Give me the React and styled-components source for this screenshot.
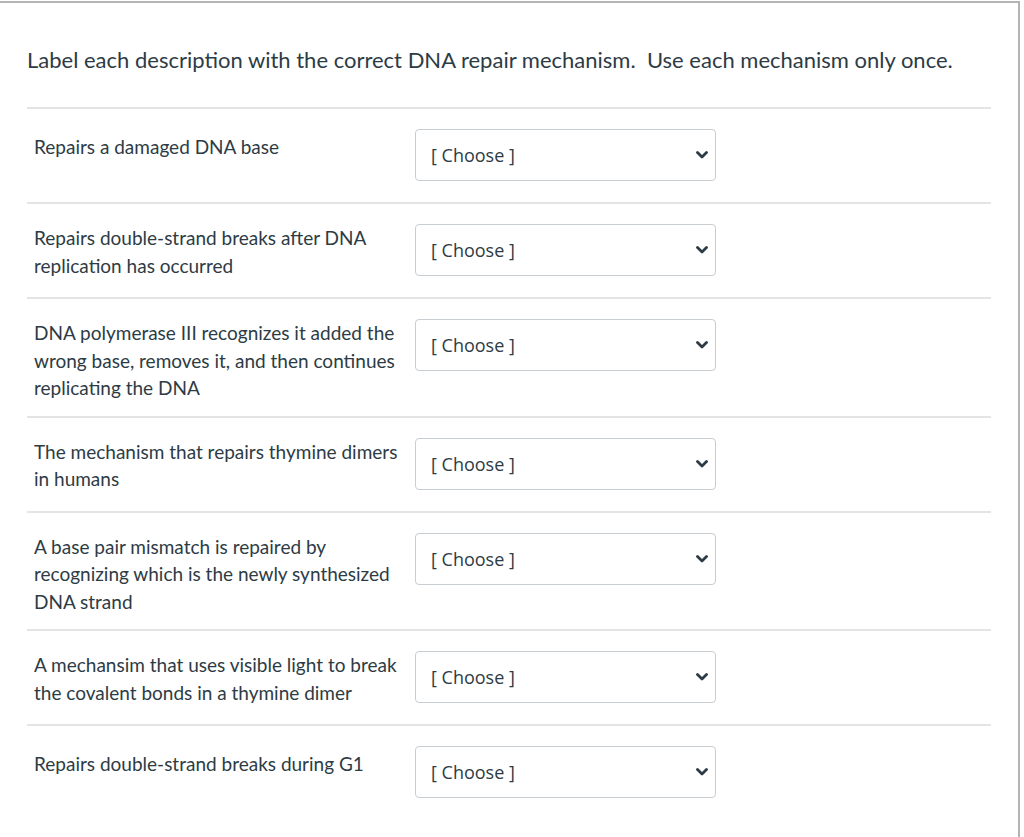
import React from "react";
import styled, { createGlobalStyle } from "styled-components";

const Global = createGlobalStyle`
  html, body { margin: 0; padding: 0; background: #fff; }
  body { font-family: Lato, "Noto Sans", sans-serif; color: #2d3b45; }
`;

const Frame = styled.div`
  width: 1020px;
  box-sizing: border-box;
  margin-top: 1px;
  border-top: 2px solid #b4b4b4;
  border-right: 2px solid #b4b4b4;
  min-height: 836px;
  padding: 0 27px 0 27px;
`;

const Heading = styled.p`
  margin: 42px 0 32px;
  font-size: 22px;
  line-height: 30px;
  color: #2d3b45;
  white-space: pre;
`;

const List = styled.div`
  display: flex;
  flex-direction: column;
`;

const Row = styled.div`
  display: flex;
  align-items: flex-start;
  border-top: 2px solid #e4e4e4;
  padding: 20px 0 14px 7px;
`;

const Label = styled.div`
  width: 372px;
  margin-right: 9px;
  padding-top: ${(p) => (p.$single ? "4px" : "0")};
  font-size: 19px;
  line-height: 27.5px;
  color: #2d3b45;
`;

const SelectWrap = styled.div`
  position: relative;
  width: 301px;
  height: 52px;
  margin-bottom: 7px;
  flex: none;
`;

const Select = styled.select`
  appearance: none;
  -webkit-appearance: none;
  width: 100%;
  height: 100%;
  box-sizing: border-box;
  border: 1px solid #c8cdd1;
  border-radius: 4px;
  background: #fff;
  padding: 0 36px 0 15px;
  font-family: "Open Sans", "Noto Sans", sans-serif;
  font-size: 18px;
  color: #2d3b45;
  outline: none;
`;

const Chevron = styled.svg`
  position: absolute;
  right: 8px;
  top: 50%;
  transform: translateY(-50%);
  pointer-events: none;
`;

const items = [
  { t: "Repairs a damaged DNA base", single: true },
  { t: "Repairs double-strand breaks after DNA replication has occurred" },
  { t: "DNA polymerase III recognizes it added the wrong base, removes it, and then continues replicating the DNA" },
  { t: "The mechanism that repairs thymine dimers in humans" },
  { t: "A base pair mismatch is repaired by recognizing which is the newly synthesized DNA strand" },
  { t: "A mechansim that uses visible light to break the covalent bonds in a thymine dimer" },
  { t: "Repairs double-strand breaks during G1", single: true },
];

function Dropdown() {
  return (
    <SelectWrap>
      <Select defaultValue="">
        <option value="">[ Choose ]</option>
      </Select>
      <Chevron width="12" height="8" viewBox="0 0 12 8">
        <path d="M1.5 1.5 L6 6 L10.5 1.5" fill="none" stroke="#2d3b45" strokeWidth="2.8" strokeLinecap="round" strokeLinejoin="round" />
      </Chevron>
    </SelectWrap>
  );
}

export default function App() {
  return (
    <>
      <Global />
      <Frame>
        <Heading>Label each description with the correct DNA repair mechanism.  Use each mechanism only once.</Heading>
        <List>
          {items.map((it) => (
            <Row key={it.t}>
              <Label $single={it.single}>{it.t}</Label>
              <Dropdown />
            </Row>
          ))}
        </List>
      </Frame>
    </>
  );
}
